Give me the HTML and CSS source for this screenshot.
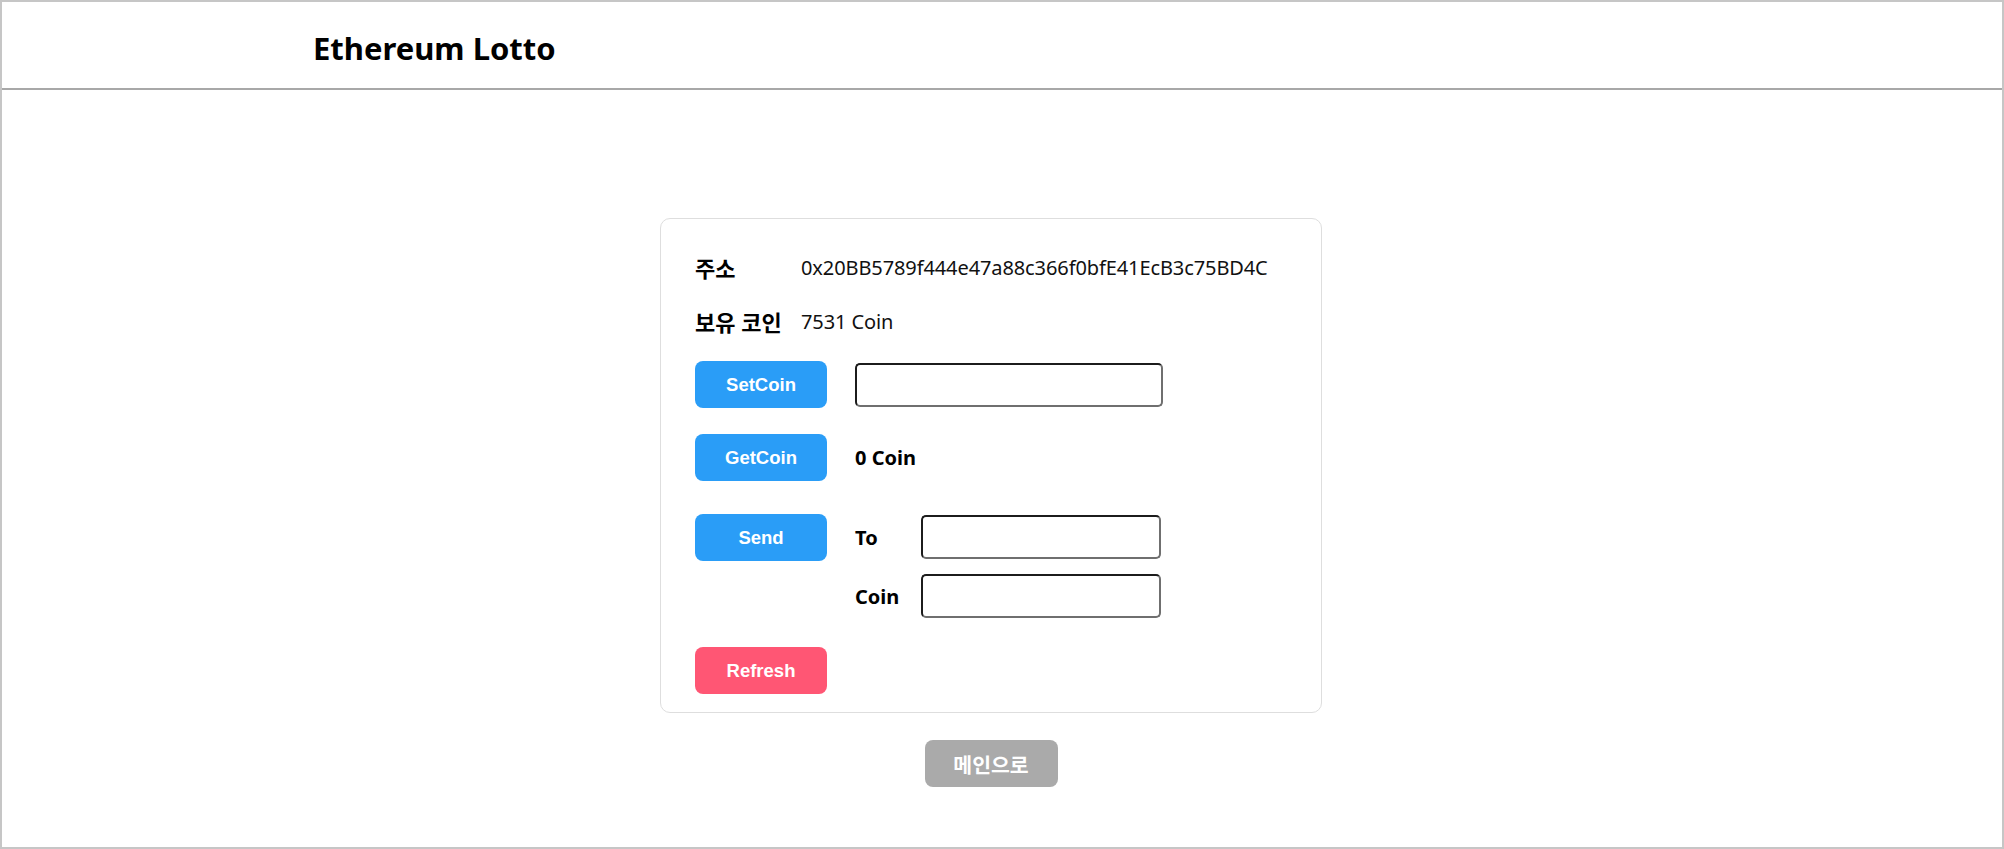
FILE: index.html
```html
<!DOCTYPE html>
<html lang="ko">
<head>
  <meta charset="utf-8">
  <title>Ethereum Lotto</title>
  <link rel="stylesheet" href="styles.css">
</head>
<body>
  <div class="frame">
    <header class="topbar">
      <h1>Ethereum Lotto</h1>
    </header>
    <main class="content">
      <section class="card">
        <div class="info">
          <span class="info-label">주소</span>
          <span class="info-value">0x20BB5789f444e47a88c366f0bfE41EcB3c75BD4C</span>
          <span class="info-label">보유 코인</span>
          <span class="info-value">7531 Coin</span>
        </div>
        <div class="action first">
          <button class="btn">SetCoin</button>
          <input class="field wide" type="text">
        </div>
        <div class="action">
          <button class="btn">GetCoin</button>
          <span class="result">0 Coin</span>
        </div>
        <div class="action send">
          <button class="btn">Send</button>
          <div class="send-fields">
            <label class="send-row"><span class="send-label">To</span><input class="field" type="text"></label>
            <label class="send-row"><span class="send-label">Coin</span><input class="field" type="text"></label>
          </div>
        </div>
        <div class="action refresh">
          <button class="btn red">Refresh</button>
        </div>
      </section>
      <button class="btn gray home">메인으로</button>
    </main>
  </div>
</body>
</html>
```

FILE: styles.css
```css
html,body {
  margin: 0;
  padding: 0;
  background: #fff;
  font-family: "Noto Sans", "Noto Sans CJK KR", sans-serif;
  color: #111;
}
.frame {
  height: 849px;
  box-sizing: border-box;
  border: 2px solid #c6c6c6;
}
.topbar {
  height: 80px;
  padding: 6px 0 0 311px;
  border-bottom: 2px solid #a8a8a8;
  display: flex;
  align-items: center;
}
.topbar h1 {
  margin: 0;
  font-size: 31px;
  font-weight: bold;
  color: #000;
}
.content {
  display: flex;
  flex-direction: column;
  align-items: center;
  padding-right: 22px;
}
.card {
  width: 662px;
  box-sizing: border-box;
  margin-top: 128px;
  padding: 35px 0 18px 34px;
  border: 1px solid #dedede;
  border-radius: 10px;
}
.info {
  display: grid;
  grid-template-columns: 106px auto;
  align-items: center;
  row-gap: 26px;
  font-size: 20px;
  line-height: 28px;
}
.info-label {
  font-size: 22px;
  font-weight: bold;
  color: #000;
}
.info-value {
  letter-spacing: -0.1px;
}
.action {
  display: flex;
  align-items: center;
  gap: 28px;
  margin-top: 26px;
}
.action.first {
  margin-top: 25px;
}
.action.send {
  align-items: flex-start;
  margin-top: 33px;
}
.action.refresh {
  margin-top: 29px;
}
.btn {
  width: 132px;
  height: 47px;
  border: 0;
  border-radius: 8px;
  background: #2a9df7;
  color: #fff;
  font-family: "Liberation Sans", "Noto Sans CJK KR", sans-serif;
  font-size: 18.5px;
  font-weight: bold;
  cursor: pointer;
}
.btn.red {
  background: #ff5674;
}
.btn.gray {
  background: #aaaaaa;
}
.home {
  width: 133px;
  margin-top: 27px;
  font-size: 20.5px;
}
.field {
  width: 240px;
  height: 44px;
  box-sizing: border-box;
  border: 2.5px solid #1c1c1c;
  border-right-color: #6f6f6f;
  border-bottom-color: #6f6f6f;
  border-radius: 5px;
  padding: 0 6px;
  font-size: 18px;
}
.field.wide {
  width: 308px;
}
.result,
.send-label {
  font-size: 20px;
  font-weight: bold;
  color: #000;
}
.send-fields {
  display: flex;
  flex-direction: column;
  gap: 15px;
  padding-top: 1px;
}
.send-row {
  display: flex;
  align-items: center;
}
.send-label {
  width: 66px;
}
```
